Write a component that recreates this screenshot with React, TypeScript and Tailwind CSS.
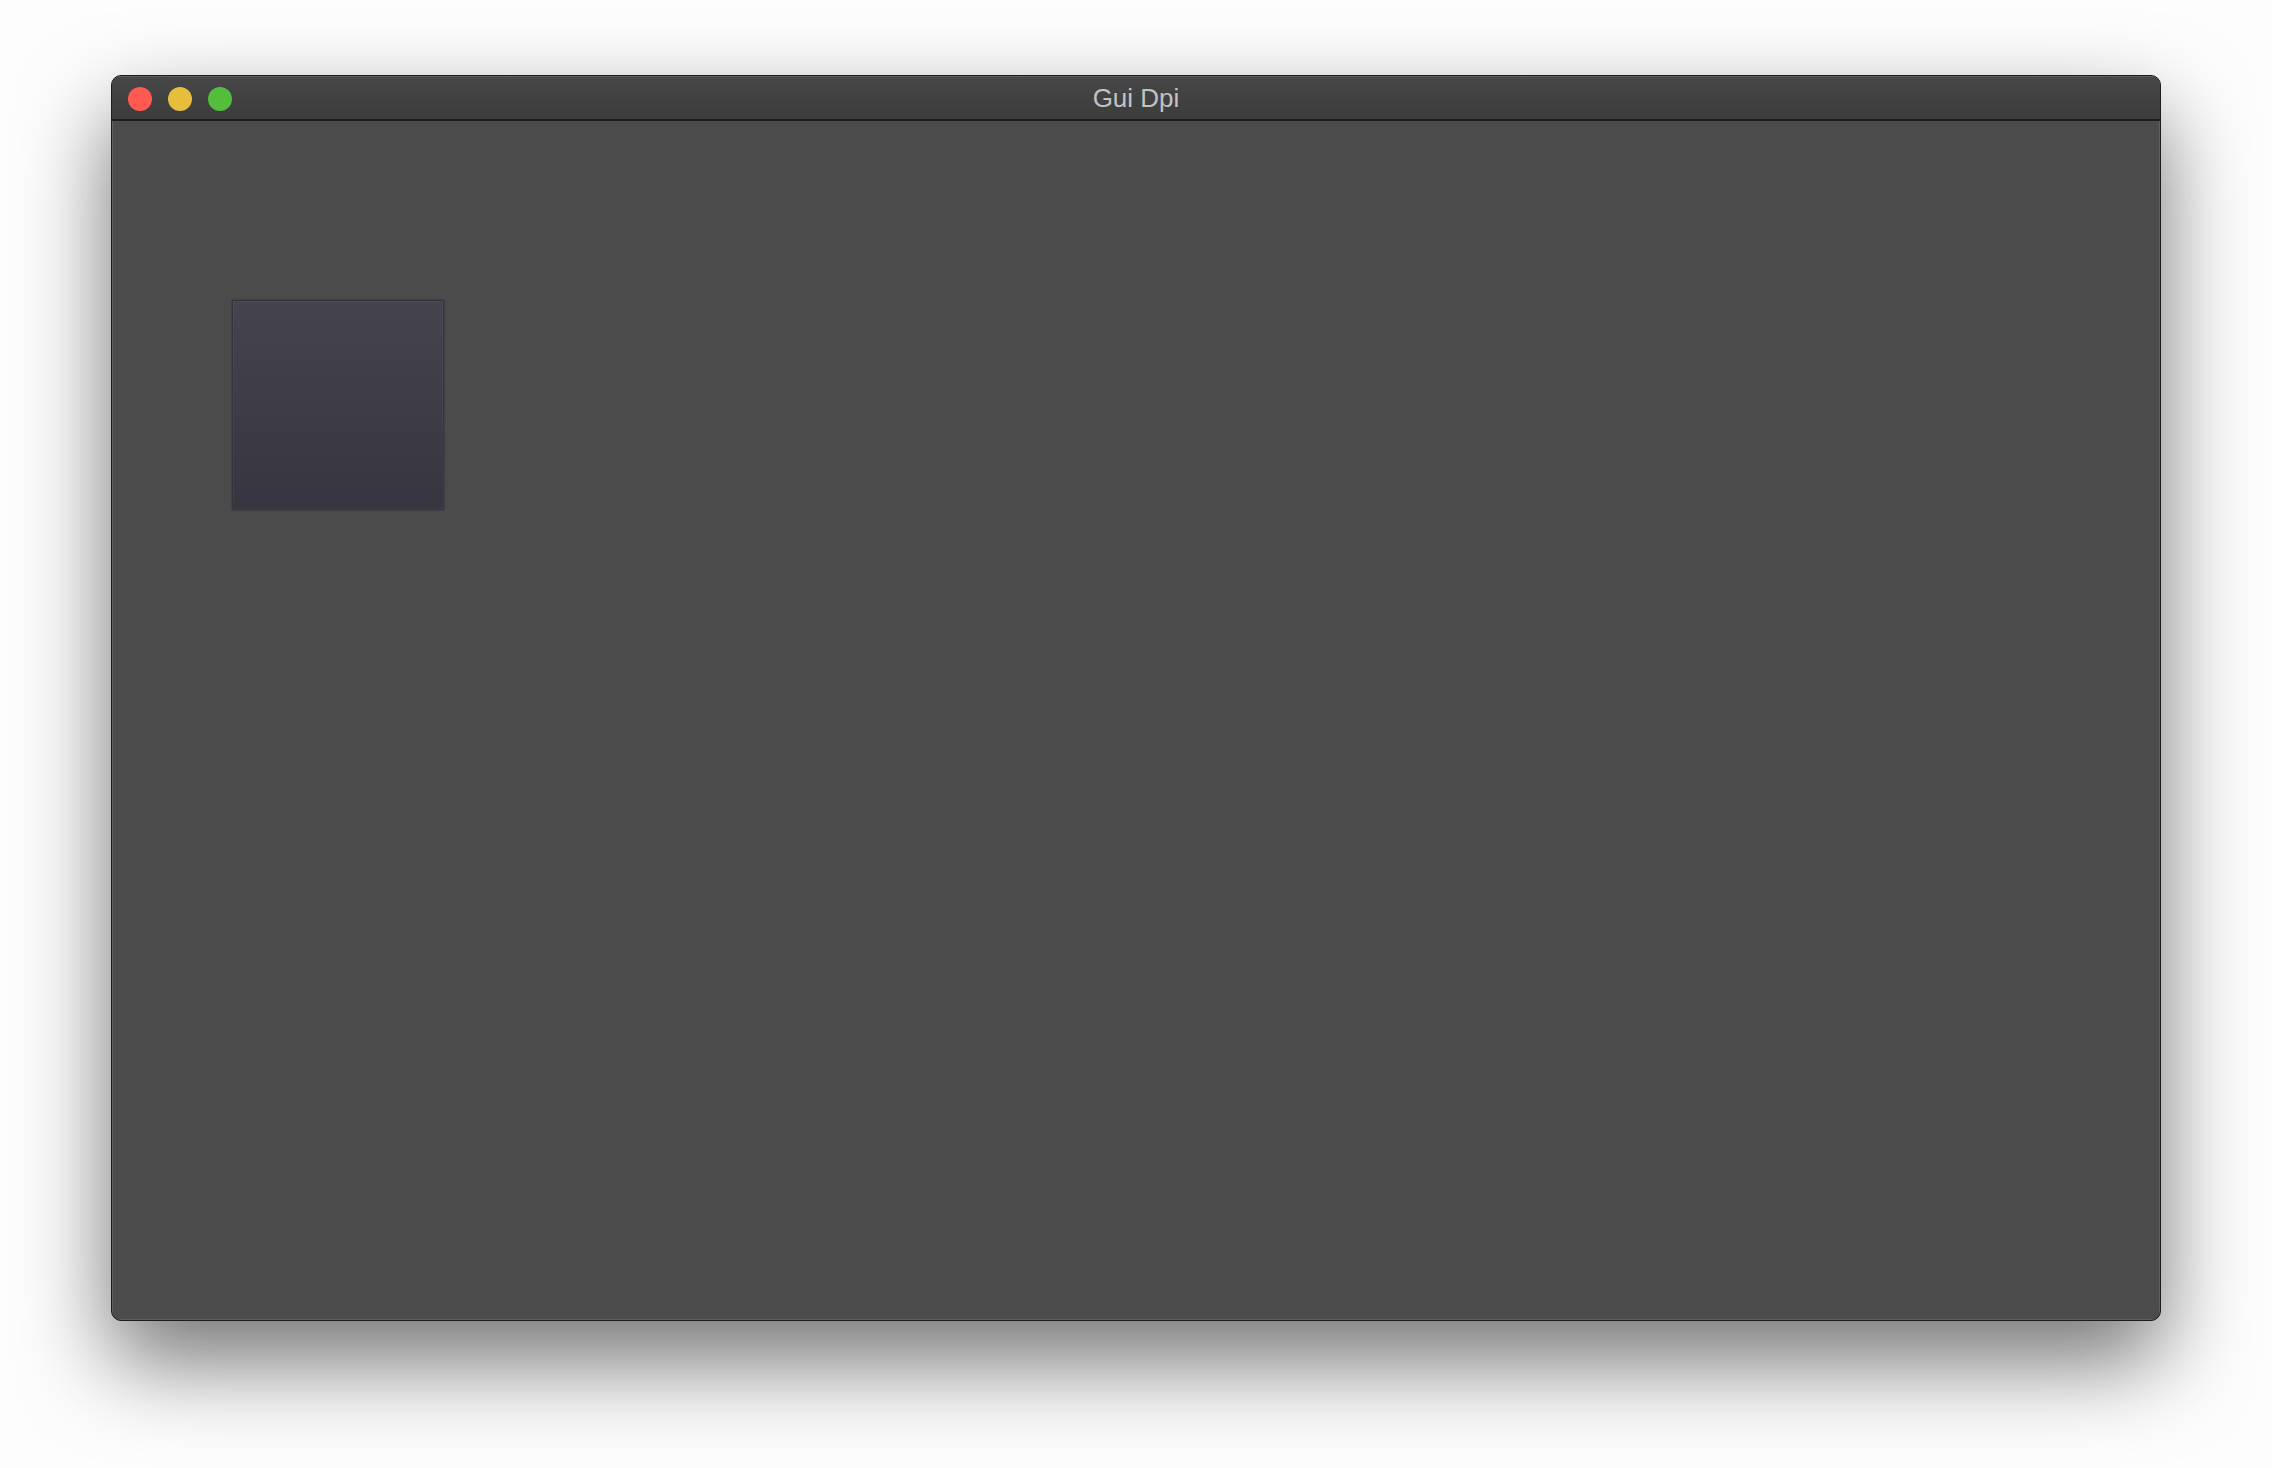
export default function App() {
  return (
    <div className="w-[2272px] h-[1468px] bg-[#fdfdfd] pt-[75px] pl-[111px] overflow-hidden">
      <div className="w-[2050px] h-[1246px] rounded-[10px] border border-[#1c1c1c] bg-[#4b4b4b] shadow-[0_40px_90px_rgba(0,0,0,0.55)] overflow-hidden flex flex-col">
        <div className="relative h-[45px] shrink-0 bg-gradient-to-b from-[#474747] to-[#3c3c3c] border-b-2 border-[#1e1e1e] shadow-[inset_0_1px_0_rgba(255,255,255,0.12)] flex items-center pt-[2px]">
          <div className="flex items-center gap-[16px] pl-[16px]">
            <span className="w-[24px] h-[24px] rounded-full bg-[#fe5a52]" />
            <span className="w-[24px] h-[24px] rounded-full bg-[#e6be3c]" />
            <span className="w-[24px] h-[24px] rounded-full bg-[#52be3c]" />
          </div>
          <span className="absolute inset-0 pt-[2px] flex items-center justify-center text-[26px] text-[#c2c2c2] font-['Liberation_Sans',Arial,sans-serif]">
            Gui Dpi
          </span>
        </div>
        <div className="flex-1 pt-[179px] pl-[120px] shadow-[inset_1px_0_0_rgba(255,255,255,0.12),inset_-1px_0_0_rgba(255,255,255,0.12),inset_0_-1px_0_rgba(255,255,255,0.12)]">
          <div className="w-[212px] h-[210px] border border-[#35333b] bg-gradient-to-b from-[#45434e] to-[#37353f] shadow-[0_0_2px_rgba(0,0,0,0.35),inset_0_0_0_1px_rgba(255,255,255,0.04)]" />
        </div>
      </div>
    </div>
  )
}
